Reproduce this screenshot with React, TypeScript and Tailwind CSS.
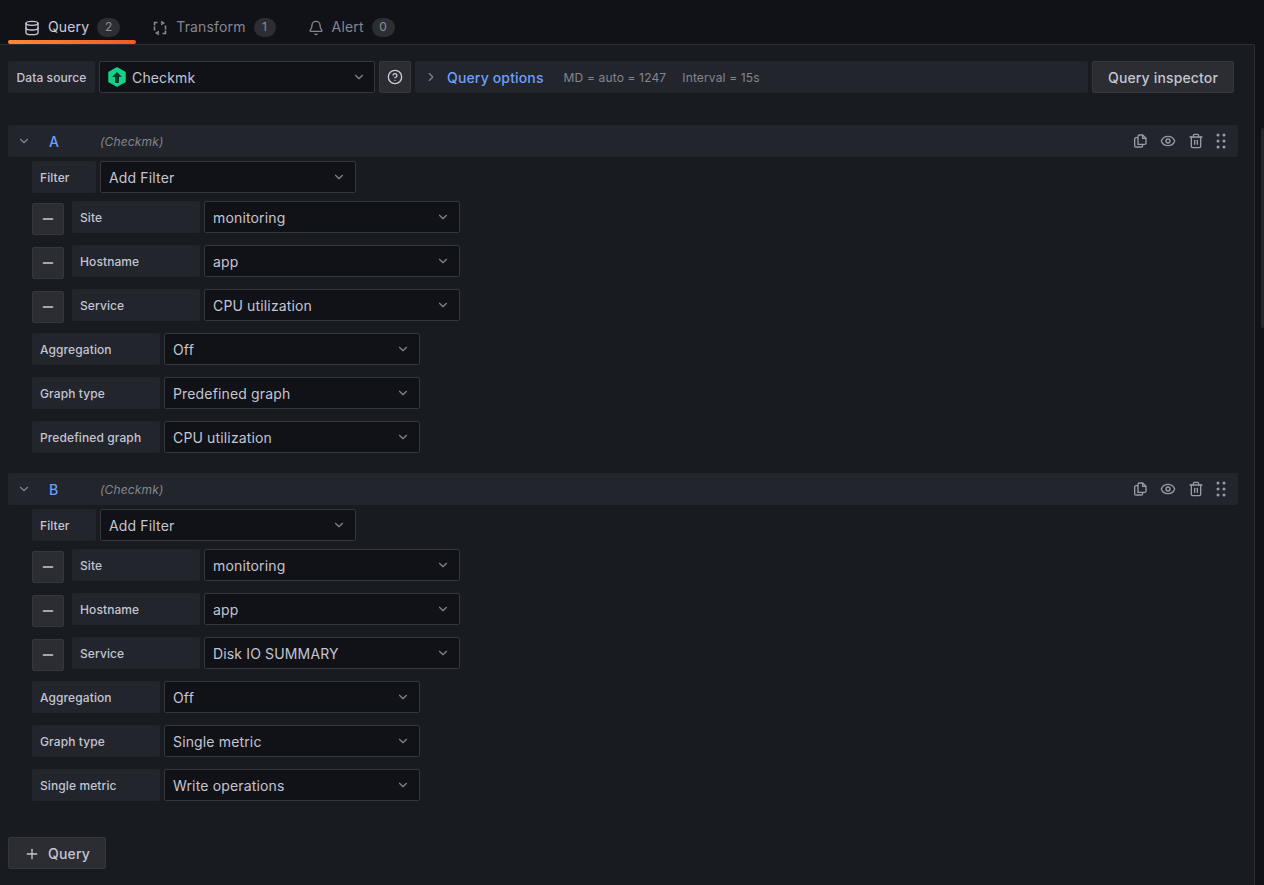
import type { ReactNode } from "react";
import { ChevronDown, ChevronRight, CircleHelp, Bell, Database, Eye, Trash2, Plus, Minus } from "lucide-react";

interface Field {
  label: string;
  value: string;
}

function Label({ text, width }: { text: string; width: string }) {
  return (
    <div className={`${width} h-8 flex items-center px-2 pt-px bg-[#22252b] text-xs font-medium tracking-[0.1px] text-[#c4c4d2] shrink-0 rounded-[2px]`}>
      {text}
    </div>
  );
}

function Select({ value, width }: { value: string; width: string }) {
  return (
    <div className={`${width} h-8 flex items-center justify-between pl-2 pr-[9px] bg-[#111217] border border-[#35373c] rounded-[2px] text-sm text-[#c4c4d2] shrink-0`}>
      <span className="pt-px">{value}</span>
      <ChevronDown className="w-3.5 h-3.5 text-[#85868f]" />
    </div>
  );
}

function CopyIcon() {
  return (
    <svg viewBox="0 0 24 24" className="w-4 h-4" fill="none" stroke="currentColor" strokeWidth="2">
      <path d="M9 17V5a2 2 0 0 1 2-2h5l5 5v7a2 2 0 0 1-2 2z" />
      <path d="M16 3v5h5" />
      <path d="M9 7H6a2 2 0 0 0-2 2v10a2 2 0 0 0 2 2h8a2 2 0 0 0 2-2v-2" />
    </svg>
  );
}

function DragIcon() {
  return (
    <svg viewBox="0 0 16 16" className="w-4 h-4" fill="currentColor">
      <circle cx="5" cy="2" r="1.5" />
      <circle cx="11" cy="2" r="1.5" />
      <circle cx="5" cy="8" r="1.5" />
      <circle cx="11" cy="8" r="1.5" />
      <circle cx="5" cy="14" r="1.5" />
      <circle cx="11" cy="14" r="1.5" />
    </svg>
  );
}

function TransformIcon() {
  return (
    <svg viewBox="0 0 16 16" className="w-4 h-4" fill="none" stroke="currentColor" strokeWidth="1.6">
      <path d="M5.5 2.5H2.5v3" />
      <path d="M9 1.5l2.5 1.5L9 4.5" />
      <path d="M13.5 5.5v4" />
      <path d="M13.5 10.5v3h-3" />
      <path d="M7 11.5L4.5 13 7 14.5" />
      <path d="M2.5 6.5v4" />
    </svg>
  );
}

function CheckmkLogo() {
  return (
    <svg viewBox="0 0 18 20" className="w-[18px] h-5 shrink-0">
      <path d="M9 1l8 4.5v9L9 19l-8-4.5v-9z" fill="#13d389" stroke="#13d389" strokeWidth="1.5" strokeLinejoin="round" />
      <path d="M9 5l5 5h-3v6H7v-6H4z" fill="#11372c" />
    </svg>
  );
}

function Tab({ icon, text, count, badge, active }: { icon: ReactNode; text: string; count: string; badge: string; active?: boolean }) {
  return (
    <div className={`relative h-[44px] flex items-center px-4 pt-[10px] ${active ? "text-[#ccccdc]" : "text-[#85868f]"}`}>
      <span className="w-4 h-4 flex items-center justify-center mr-2 mt-0.5">{icon}</span>
      <span className="text-sm">{text}</span>
      <span className={`ml-2 h-[19px] ${badge} rounded-full bg-[#2d2e34] text-xs flex items-center justify-center text-[#8e8f96]`}>
        {count}
      </span>
      {active && <div className="absolute left-0 right-0 bottom-0 h-1 rounded-[2px] bg-gradient-to-r from-[#ff8833] to-[#f05a28]" />}
    </div>
  );
}

function RemovableRow({ field }: { field: Field }) {
  return (
    <div className="flex gap-2 mb-3">
      <div className="w-8 h-8 translate-y-[2px] flex items-center justify-center bg-[#2b2d32] border border-[#35373c] rounded-[2px] text-[#ccccdc] shrink-0">
        <Minus className="w-4 h-4" strokeWidth={2} />
      </div>
      <div className="flex gap-1">
        <Label text={field.label} width="w-[128px]" />
        <Select value={field.value} width="w-[256px]" />
      </div>
    </div>
  );
}

function QueryRow({ letter, service, lastLabel, lastValue, graphType }: { letter: string; service: string; lastLabel: string; lastValue: string; graphType: string }) {
  const removable: Field[] = [
    { label: "Site", value: "monitoring" },
    { label: "Hostname", value: "app" },
    { label: "Service", value: service },
  ];
  const fields: Field[] = [
    { label: "Aggregation", value: "Off" },
    { label: "Graph type", value: graphType },
    { label: lastLabel, value: lastValue },
  ];
  return (
    <div className="mb-5">
      <div className="h-8 flex items-center bg-[#22252b] rounded-[2px]">
        <ChevronDown className="w-3.5 h-3.5 ml-[9px] text-[#85868f]" />
        <span className="ml-[18px] w-[51px] pt-px text-sm font-medium text-[#6e9fff]">{letter}</span>
        <span className="pt-px text-xs italic text-[#85868f]">(Checkmk)</span>
        <div className="ml-auto mr-[9px] flex items-center text-[#9a9ba3]">
          <span className="flex items-center gap-3">
            <CopyIcon />
            <Eye className="w-4 h-4" />
            <Trash2 className="w-4 h-4" />
          </span>
          <span className="ml-[9px]">
            <DragIcon />
          </span>
        </div>
      </div>
      <div className="pl-6 pt-1">
        <div className="flex gap-1 mb-2">
          <Label text="Filter" width="w-[64px]" />
          <Select value="Add Filter" width="w-[256px]" />
        </div>
        {removable.map((f) => (
          <RemovableRow key={f.label} field={f} />
        ))}
        {fields.map((f, i) => (
          <div key={f.label} className={`flex gap-1 ${i < 2 ? "mb-3" : ""}`}>
            <Label text={f.label} width="w-[128px]" />
            <Select value={f.value} width="w-[256px]" />
          </div>
        ))}
      </div>
    </div>
  );
}

export default function App() {
  return (
    <div className="relative w-[1264px] h-[885px] overflow-hidden bg-[#111217] font-['Inter',sans-serif] tracking-[0.15px]">
      <div className="flex pl-2 h-[44px]">
        <Tab icon={<Database className="w-4 h-4" />} text="Query" count="2" badge="w-[23px]" active />
        <Tab icon={<TransformIcon />} text="Transform" count="1" badge="w-[22px]" />
        <Tab icon={<Bell className="w-4 h-4" />} text="Alert" count="0" badge="w-[23px]" />
      </div>
      <div className="w-[1255px] h-[841px] bg-[#181b1f] border-t border-r border-[#2c2e33] rounded-tr-[2px] pt-4 pl-2 pr-4">
        <div className="flex gap-1 mb-8 pr-1">
          <div className="h-8 w-[87px] pt-px flex items-center justify-center bg-[#22252b] text-xs font-medium tracking-[0.1px] text-[#c4c4d2] rounded-[2px]">Data source</div>
          <div className="h-8 w-[276px] flex items-center justify-between pl-2 pr-2 bg-[#111217] border border-[#35373c] rounded-[2px] text-sm text-[#c4c4d2]">
            <span className="flex items-center gap-1.5">
              <CheckmkLogo />
              <span className="pt-px">Checkmk</span>
            </span>
            <ChevronDown className="w-3.5 h-3.5 text-[#85868f]" />
          </div>
          <div className="w-8 h-8 flex items-center justify-center bg-[#2b2d32] border border-[#35373c] rounded-[2px] text-[#ccccdc]">
            <CircleHelp className="w-4 h-4" />
          </div>
          <div className="h-8 w-[673px] flex items-center bg-[#22252b] rounded-[2px]">
            <ChevronRight className="w-3.5 h-3.5 ml-[9px] text-[#85868f]" />
            <span className="ml-[9px] pt-px text-sm font-medium text-[#6e9fff]">Query options</span>
            <span className="ml-5 pt-px text-xs text-[#85868f]">MD = auto = 1247</span>
            <span className="ml-4 pt-px text-xs text-[#85868f]">Interval = 15s</span>
          </div>
          <div className="h-8 w-[142px] pt-px flex items-center justify-center bg-[#2b2d32] border border-[#35373c] rounded-[2px] text-sm font-medium text-[#c4c4d2]">
            Query inspector
          </div>
        </div>
        <QueryRow letter="A" service="CPU utilization" graphType="Predefined graph" lastLabel="Predefined graph" lastValue="CPU utilization" />
        <QueryRow letter="B" service="Disk IO SUMMARY" graphType="Single metric" lastLabel="Single metric" lastValue="Write operations" />
        <div className="mt-9 w-[98px] h-8 pt-px flex items-center justify-center gap-2 bg-[#2b2d32] border border-[#35373c] rounded-[2px] text-sm font-medium text-[#c4c4d2]">
          <Plus className="w-4 h-4" />
          Query
        </div>
      </div>
      <div className="absolute left-[1261px] top-[128px] w-[3px] h-[200px] rounded-[2px] bg-[#24262b]" />
    </div>
  );
}
